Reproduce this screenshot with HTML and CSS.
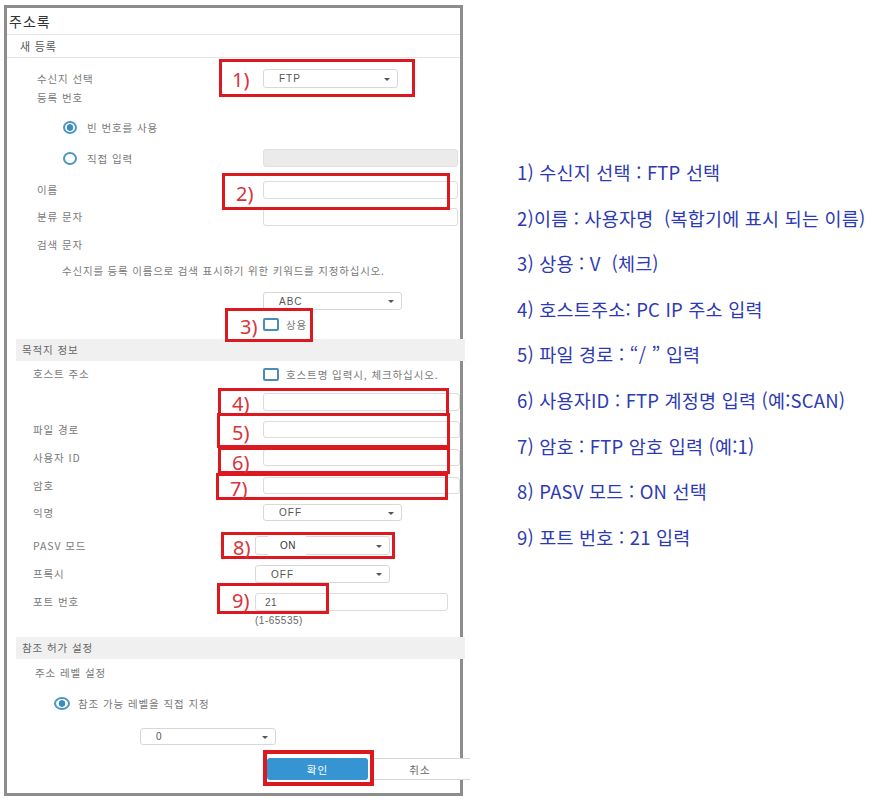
FILE: index.html
```html
<!DOCTYPE html>
<html lang="ko">
<head>
    <meta charset="UTF-8">
    <meta name="viewport" content="width=device-width, initial-scale=1.0">
    <title>주소록 - FTP 등록</title>
    <link rel="stylesheet" href="styles.css">
</head>
<body>
<div class="page">
    <div class="book">
        <div class="book-title">주소록</div>
        <div class="sub-title">새 등록</div>

        <div class="sec sec-new">
            <div class="row r-dest">
                <span class="lbl">수신지 선택</span>
                <div class="sel sel-short"><span>FTP</span><i class="caret"></i></div>
            </div>
            <div class="row r-regno"><span class="lbl">등록 번호</span></div>
            <div class="row r-opt1">
                <label class="opt"><i class="radio on"></i>빈 번호를 사용</label>
            </div>
            <div class="row r-opt2">
                <label class="opt"><i class="radio"></i>직접 입력</label>
                <input class="inp inp-wide" type="text" disabled>
            </div>
            <div class="row r-name">
                <span class="lbl">이름</span>
                <input class="inp inp-wide" type="text">
            </div>
            <div class="row r-class">
                <span class="lbl">분류 문자</span>
                <input class="inp inp-wide" type="text">
            </div>
            <div class="row r-search"><span class="lbl">검색 문자</span></div>
            <div class="row r-hint">
                <span class="hint">수신지를 등록 이름으로 검색 표시하기 위한 키워드를 지정하십시오.</span>
            </div>
            <div class="row r-abc">
                <span class="lbl"></span>
                <div class="sel sel-mid"><span>ABC</span><i class="caret"></i></div>
            </div>
            <div class="row r-fav">
                <span class="lbl"></span>
                <label class="chk-wrap"><i class="chk"></i>상용</label>
            </div>
        </div>

        <div class="band band-dest">목적지 정보</div>

        <div class="sec sec-dest">
            <div class="row r-host">
                <span class="lbl">호스트 주소</span>
                <label class="chk-wrap"><i class="chk"></i>호스트명 입력시, 체크하십시오.</label>
            </div>
            <div class="row r-ip">
                <span class="lbl"></span>
                <input class="inp inp-full" type="text">
            </div>
            <div class="row r-path">
                <span class="lbl">파일 경로</span>
                <input class="inp inp-full" type="text">
            </div>
            <div class="row r-user">
                <span class="lbl">사용자 ID</span>
                <input class="inp inp-full" type="text">
            </div>
            <div class="row r-pw">
                <span class="lbl">암호</span>
                <input class="inp inp-full" type="password">
            </div>
            <div class="row r-anon">
                <span class="lbl">익명</span>
                <div class="sel sel-mid"><span>OFF</span><i class="caret"></i></div>
            </div>
            <div class="row r-pasv shift">
                <span class="lbl">PASV 모드</span>
                <div class="sel sel-short"><span class="on-patch">ON</span><i class="caret"></i></div>
            </div>
            <div class="row r-proxy shift">
                <span class="lbl">프록시</span>
                <div class="sel sel-short"><span>OFF</span><i class="caret"></i></div>
            </div>
            <div class="row r-port shift">
                <span class="lbl">포트 번호</span>
                <input class="inp inp-port" type="text" value="21">
            </div>
            <div class="row r-range shift">
                <span class="lbl"></span>
                <span class="range">(1-65535)</span>
            </div>
        </div>

        <div class="band band-perm">참조 허가 설정</div>

        <div class="sec sec-perm">
            <div class="row r-level"><span class="lbl">주소 레벨 설정</span></div>
            <div class="row r-opt3">
                <label class="opt"><i class="radio on"></i>참조 가능 레벨을 직접 지정</label>
            </div>
            <div class="row r-zero">
                <div class="sel sel-zero"><span>0</span><i class="caret"></i></div>
            </div>
            <div class="row r-btns">
                <button class="btn-ok">확인</button>
                <button class="btn-cancel">취소</button>
            </div>
        </div>
    </div>

    <div class="notes">
        <p>1) 수신지 선택 : FTP 선택</p>
        <p>2)이름 : 사용자명&nbsp;&nbsp;(복합기에 표시 되는 이름)</p>
        <p>3) 상용 : V&nbsp;&nbsp;(체크)</p>
        <p>4) 호스트주소: PC IP 주소 입력</p>
        <p>5) 파일 경로 : “/ ” 입력</p>
        <p>6) 사용자ID : FTP 계정명 입력 (예:SCAN)</p>
        <p>7) 암호 : FTP 암호 입력 (예:1)</p>
        <p>8) PASV 모드 : ON 선택</p>
        <p>9) 포트 번호 : 21 입력</p>
    </div>

    <!-- red guide boxes drawn over the form -->
    <div class="marks">
        <div class="mark m1">1)</div>
        <div class="mark m2">2)</div>
        <div class="mark m3">3)</div>
        <div class="mark m4">4)</div>
        <div class="mark m5">5)</div>
        <div class="mark m6">6)</div>
        <div class="mark m7">7)</div>
        <div class="mark m8">8)</div>
        <div class="mark m9">9)</div>
        <div class="mark m10"></div>
    </div>
</div>
</body>
</html>
```

FILE: styles.css
```css
body {
    margin: 0;
    background: #fff;
    font-family: "Noto Sans CJK KR", "Noto Sans", sans-serif;
}
.page {
    position: relative;
    display: flex;
    align-items: flex-start;
    width: 885px;
    height: 802px;
    overflow: hidden;
}

/* address book panel */
.book {
    flex: none;
    box-sizing: border-box;
    width: 459px;
    height: 791px;
    margin: 5px 0 0 4px;
    border: 3px solid #8d8d8d;
}
.book-title {
    height: 26px;
    line-height: 26px;
    padding-left: 2px;
    border-bottom: 1px solid #e4e4e4;
    font-size: 14px;
    letter-spacing: 1px;
    color: #333;
}
.sub-title {
    height: 22px;
    line-height: 22px;
    padding-left: 13px;
    border-bottom: 1px solid #e4e4e4;
    font-size: 11px;
    letter-spacing: 0.8px;
    color: #555;
}
.band {
    height: 22px;
    line-height: 22px;
    margin: 0 -5px 0 9px;
    padding-left: 6px;
    background: #f0f0f0;
    font-size: 10.5px;
    letter-spacing: 0.9px;
    color: #666;
}
.band-dest { margin-top: 8px; }
.band-perm { margin-top: 11px; }

.row {
    display: flex;
    align-items: center;
}
.lbl {
    flex: none;
    box-sizing: border-box;
    width: 256px;
    padding-left: 30px;
    font-size: 10.5px;
    letter-spacing: 0.9px;
    color: #7a7a7a;
    line-height: 14px;
}
.sec-dest .lbl { padding-left: 26px; }
.sec-perm .lbl { padding-left: 28px; }
.row.shift .lbl { width: 248px; }

/* row spacing, top to bottom */
.r-dest   { margin-top: 11px; height: 19px; }
.r-regno  { margin-top: 3px;  height: 14px; }
.r-opt1   { margin-top: 15px; height: 15px; }
.r-opt2   { margin-top: 14px; height: 18px; }
.r-name   { margin-top: 14px; height: 18px; }
.r-class  { margin-top: 9px;  height: 18px; }
.r-search { margin-top: 12px; height: 14px; }
.r-hint   { margin-top: 11px; height: 14px; }
.r-abc    { margin-top: 15px; height: 18px; }
.r-fav    { margin-top: 7px;  height: 14px; }

.r-host   { margin-top: 6px;  height: 14px; }
.r-ip     { margin-top: 12px; height: 18px; }
.r-path   { margin-top: 10px; height: 17px; }
.r-user   { margin-top: 11px; height: 17px; }
.r-pw     { margin-top: 11px; height: 17px; }
.r-anon   { margin-top: 10px; height: 17px; }
.r-pasv   { margin-top: 15px; height: 19px; }
.r-proxy  { margin-top: 10px; height: 18px; }
.r-port   { margin-top: 10px; height: 18px; }
.r-range  { margin-top: 3px;  height: 12px; }

.r-level  { margin-top: 7px;  height: 14px; }
.r-opt3   { margin-top: 16px; height: 15px; }
.r-zero   { margin-top: 17px; height: 17px; }
.r-btns   { margin-top: 13px; height: 22px; padding-left: 260px; }

/* fields */
.inp {
    flex: none;
    box-sizing: border-box;
    height: 100%;
    margin: 0;
    padding: 0 9px;
    border: 1px solid #dcdcdc;
    border-radius: 3px;
    background: #fff;
    font-family: "Liberation Sans", Arial, sans-serif;
    font-size: 10px;
    color: #555;
    outline: none;
}
.inp:disabled {
    background: #ebebeb;
    border-color: #e0e0e0;
}
.inp-wide { width: 195px; }
.inp-full { width: 197px; }
.inp-port { width: 193px; letter-spacing: 0.5px; }

.sel {
    flex: none;
    position: relative;
    box-sizing: border-box;
    height: 100%;
    padding-left: 15px;
    border: 1px solid #d8d8d8;
    border-radius: 3px;
    background: #fff;
    display: flex;
    align-items: center;
    font-family: "Liberation Sans", Arial, sans-serif;
    font-size: 10px;
    letter-spacing: 1px;
    color: #555;
}
.sel-short { width: 135px; }
.sel-mid { width: 139px; }
.sel-zero { width: 136px; margin-left: 133px; }
.caret {
    position: absolute;
    right: 7px;
    top: 50%;
    margin-top: -1px;
    border-left: 3px solid transparent;
    border-right: 3px solid transparent;
    border-top: 3px solid #555;
}
.on-patch {
    position: absolute;
    left: 12px;
    top: -3px;
    width: 38px;
    height: 23px;
    line-height: 23px;
    padding-left: 12px;
    box-sizing: border-box;
    background: #fff;
    letter-spacing: 0.5px;
    color: #333;
}
.range {
    font-family: "Liberation Sans", Arial, sans-serif;
    font-size: 10px;
    letter-spacing: 0.5px;
    color: #666;
}

.opt {
    flex: none;
    box-sizing: border-box;
    width: 256px;
    padding-left: 56px;
    display: flex;
    align-items: center;
    font-size: 10.5px;
    letter-spacing: 0.9px;
    color: #7a7a7a;
}
.r-opt3 .opt { padding-left: 47px; width: auto; }
.radio {
    flex: none;
    box-sizing: border-box;
    width: 14px;
    height: 13px;
    margin-right: 10px;
    border: 2px solid #4a97c2;
    border-radius: 50%;
    background: #fff;
}
.radio.on {
    background: radial-gradient(circle, #3a8cc1 0, #3a8cc1 3px, #fff 3.6px);
}
.r-opt3 .radio { width: 16px; margin-right: 8px; }

.chk-wrap {
    display: flex;
    align-items: center;
    font-size: 10.5px;
    letter-spacing: 0.9px;
    color: #7a7a7a;
}
.chk {
    flex: none;
    box-sizing: border-box;
    width: 16px;
    height: 13px;
    margin-right: 7px;
    border: 2px solid #4b8db8;
    border-radius: 2px;
}

.hint {
    padding-left: 55px;
    font-size: 10.5px;
    letter-spacing: 0.8px;
    color: #7a7a7a;
    white-space: nowrap;
}

button {
    flex: none;
    font-family: "Noto Sans CJK KR", sans-serif;
    font-size: 10.5px;
    letter-spacing: 1px;
    height: 22px;
    cursor: pointer;
}
.btn-ok {
    width: 101px;
    border: none;
    border-radius: 3px;
    background: #3794d3;
    color: #fff;
}
.btn-cancel {
    width: 100px;
    margin-left: 2px;
    border: none;
    border-top: 1px solid #d6d6d6;
    border-bottom: 1px solid #d6d6d6;
    background: #fff;
    color: #666;
}

/* explanation list */
.notes {
    margin-left: 54px;
    padding-top: 150px;
    color: #2d3ab3;
    font-size: 18.5px;
    letter-spacing: 0.2px;
}
.notes p {
    margin: 0;
    height: 45.6px;
    line-height: 45.6px;
    white-space: nowrap;
}

/* red guide boxes */
.marks {
    position: absolute;
    left: 0;
    top: 0;
    width: 100%;
    height: 100%;
    pointer-events: none;
}
.mark {
    position: absolute;
    box-sizing: border-box;
    border: 3px solid #dc1820;
    display: flex;
    align-items: center;
    padding-top: 3px;
    font-family: "Noto Sans", sans-serif;
    font-size: 20px;
    color: #d8343b;
}
.m1  { left: 219px; top: 59px;  width: 196px; height: 38px; padding-left: 10px; }
.m2  { left: 222px; top: 173px; width: 228px; height: 37px; padding-left: 11px; }
.m3  { left: 225px; top: 308px; width: 88px;  height: 34px; padding-left: 12px; }
.m4  { left: 218px; top: 388px; width: 231px; height: 28px; padding-left: 11px; }
.m5  { left: 217px; top: 413px; width: 233px; height: 35px; padding-left: 12px; }
.m6  { left: 218px; top: 447px; width: 232px; height: 27px; padding-left: 11px; }
.m7  { left: 216px; top: 473px; width: 232px; height: 27px; padding-left: 11px; }
.m8  { left: 221px; top: 532px; width: 174px; height: 27px; padding-left: 9px; }
.m9  { left: 217px; top: 583px; width: 112px; height: 31px; padding-left: 12px; }
.m10 { left: 263px; top: 750px; width: 111px; height: 36px; border-width: 4px; }
```
